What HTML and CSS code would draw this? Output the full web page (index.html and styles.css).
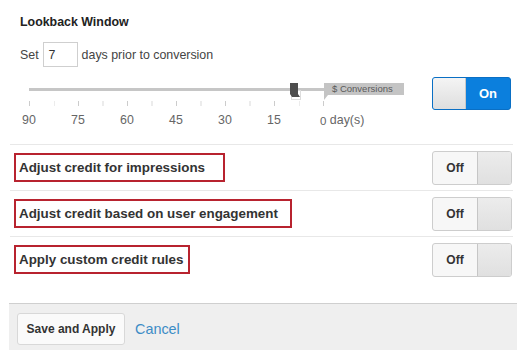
FILE: index.html
```html
<!DOCTYPE html>
<html>
<head>
<meta charset="utf-8">
<link rel="stylesheet" href="styles.css">
</head>
<body>
<div class="panel">
  <div class="lookback">
    <div class="title">Lookback Window</div>
    <div class="set-row">
      <span>Set</span>
      <span class="days-input">7</span>
      <span>days prior to conversion</span>
    </div>
    <div class="slider-row">
      <div class="slider">
        <div class="track"></div>
        <div class="ticks"></div>
        <div class="scale">
          <span class="lbl">90</span>
          <span class="lbl">75</span>
          <span class="lbl">60</span>
          <span class="lbl">45</span>
          <span class="lbl">30</span>
          <span class="lbl">15</span>
          <span class="lbl last"><span class="zero">0</span> day(s)</span>
        </div>
        <svg class="handle" width="12" height="18" viewBox="0 0 12 18">
          <rect x="2.5" y="8.5" width="9" height="9" fill="#fff" stroke="#ddd"/>
          <path d="M1 1 H9 V12 L11 15 H3 L1 12 Z" fill="#4d4d4d"/>
        </svg>
        <div class="bubble">$ Conversions</div>
      </div>
      <div class="toggle on">
        <span class="knob"></span>
        <span class="state">On</span>
      </div>
    </div>
  </div>

  <div class="row">
    <span class="label-box wide">Adjust credit for impressions</span>
    <div class="toggle off"><span class="state">Off</span><span class="knob"></span></div>
  </div>
  <div class="row">
    <span class="label-box">Adjust credit based on user engagement</span>
    <div class="toggle off"><span class="state">Off</span><span class="knob"></span></div>
  </div>
  <div class="row">
    <span class="label-box narrow">Apply custom credit rules</span>
    <div class="toggle off"><span class="state">Off</span><span class="knob"></span></div>
  </div>

  <div class="footer">
    <button class="btn-save">Save and Apply</button>
    <span class="cancel">Cancel</span>
  </div>
</div>
</body>
</html>
```
FILE: styles.css
```css
* { box-sizing: border-box; }
html, body { margin: 0; padding: 0; background: #fff; }
body {
  font-family: "Liberation Sans", Arial, Helvetica, sans-serif;
  color: #333;
  width: 529px;
  height: 357px;
  overflow: hidden;
}
.panel {
  margin-left: 10px;
  width: 503px;
}
.lookback {
  padding: 14px 2px 17px 10px;
}
.title {
  font-size: 12.4px;
  font-weight: bold;
  line-height: 16px;
  color: #222;
}
.set-row {
  margin-top: 12px;
  display: flex;
  align-items: center;
  gap: 4px;
  font-size: 12.4px;
  color: #444;
  height: 25px;
}
.days-input {
  width: 35px;
  height: 25px;
  border: 1px solid #cfcfcf;
  padding: 4px 0 0 5px;
  line-height: 16px;
  color: #333;
}
.slider-row {
  margin-top: 10px;
  display: flex;
  justify-content: space-between;
  align-items: flex-start;
}
.slider {
  position: relative;
  width: 400px;
  padding-top: 11px;
}
.track {
  margin-left: 9px;
  width: 296px;
  height: 3px;
  background: #c6c6c6;
}
.ticks {
  margin-top: 10px;
  margin-left: 9px;
  width: 296px;
  height: 5px;
  background:
    repeating-linear-gradient(to right, #cccccc 0 1px, transparent 1px 49px),
    repeating-linear-gradient(to right, #ececec 0 1px, transparent 1px 24.5px);
}
.scale {
  margin-top: 7px;
  display: flex;
  gap: 35px;
  margin-left: 2px;
  font-size: 12.4px;
  color: #666;
  line-height: 14px;
}
.lbl {
  width: 14px;
  text-align: center;
  white-space: nowrap;
}
.lbl.last {
  width: auto;
  margin-left: 4px;
  text-align: left;
}
.zero { position: relative; top: 1px; font-size: 11.5px; }
.handle {
  position: absolute;
  left: 269px;
  top: 5px;
}
.bubble {
  position: absolute;
  left: 304px;
  top: 6px;
  width: 80px;
  height: 12px;
  background: #c4c4c4;
  color: #5a5a5a;
  font-size: 9.5px;
  line-height: 12px;
  padding-left: 8px;
}
.bubble::after {
  content: "";
  position: absolute;
  left: 0;
  top: 12px;
  border-left: 4px solid #c4c4c4;
  border-bottom: 5px solid transparent;
}
.toggle {
  display: flex;
  height: 34px;
  width: 80px;
  border-radius: 3px;
  overflow: hidden;
  flex-shrink: 0;
}
.toggle.on {
  height: 33px;
  width: 79px;
  border: 1px solid #0a6fc4;
  background: #0b7fdd;
}
.toggle.on .knob {
  width: 33px;
  background: linear-gradient(#f4f4f4, #dedede);
  border-right: 1px solid #c8c8c8;
}
.toggle.on .state {
  flex: 1;
  color: #fff;
  font-weight: bold;
  font-size: 13px;
  display: flex;
  align-items: center;
  justify-content: center;
}
.toggle.off {
  border: 1px solid #cdcdcd;
  background: #f7f7f7;
}
.toggle.off .state {
  flex: 1;
  display: flex;
  align-items: center;
  justify-content: center;
  font-weight: bold;
  font-size: 12px;
  color: #333;
}
.toggle.off .knob {
  width: 34px;
  background: linear-gradient(#ececec, #e0e0e0);
  border-left: 1px solid #c6c6c6;
}
.row {
  display: flex;
  align-items: center;
  justify-content: space-between;
  height: 46px;
  border-top: 1px solid #e8e8e8;
  padding: 0 1px 0 4px;
}
.label-box {
  border: 2px solid #b8232f;
  padding: 4px 12px 4px 3px;
  font-size: 13.4px;
  font-weight: bold;
  line-height: 17px;
  color: #333;
}
.label-box.wide { padding-right: 18px; }
.label-box.narrow { padding-right: 5px; }
.footer {
  margin-top: 21px;
  margin-left: -1px;
  width: 508px;
  height: 47px;
  background: #efefef;
  border-top: 1px solid #cfcfcf;
  padding: 9px 0 0 8px;
  display: flex;
  align-items: flex-start;
  gap: 10px;
}
.btn-save {
  font-family: inherit;
  height: 32px;
  width: 108px;
  background: #fafafa;
  border: 1px solid #d8d8d8;
  border-radius: 3px;
  font-size: 12px;
  font-weight: bold;
  color: #333;
  padding: 0;
}
.cancel {
  font-size: 14.4px;
  color: #3d8cc6;
  line-height: 32px;
}
```
